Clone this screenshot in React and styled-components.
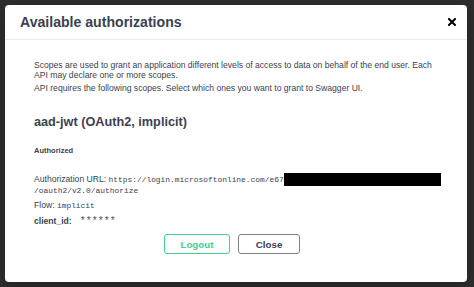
import React from 'react';
import styled, { createGlobalStyle } from 'styled-components';

const GlobalStyle = createGlobalStyle`
  html, body {
    margin: 0;
    padding: 0;
    background: #2e2e2e;
  }
  body {
    font-family: "Liberation Sans", Arial, sans-serif;
    color: #3b4151;
  }
`;

const Backdrop = styled.div`
  width: 474px;
  height: 287px;
  box-sizing: border-box;
  padding: 5px 7px 5px 5px;
  background: #2e2e2e;
`;

const Modal = styled.div`
  width: 462px;
  height: 277px;
  background: #fff;
  border-radius: 4px;
  box-shadow: 0 4px 18px rgba(0, 0, 0, 0.25);
  display: flex;
  flex-direction: column;
  overflow: hidden;
`;

const Header = styled.div`
  height: 34px;
  display: flex;
  align-items: center;
  justify-content: space-between;
  padding: 0 11px 0 15px;
  border-bottom: 1px solid #ebebeb;
`;

const Title = styled.h3`
  margin: 0;
  font-size: 14.1px;
  font-weight: 700;
  color: #3b4151;
`;

const CloseX = styled.button`
  border: none;
  background: none;
  padding: 0;
  width: 8px;
  height: 8px;
  display: flex;
  cursor: pointer;
`;

const Content = styled.div`
  padding: 21px 25px 0 29px;
`;

const Text = styled.p`
  margin: ${p => p.$mt || 0}px 0 0;
  font-size: 8.6px;
  line-height: ${p => p.$lh || 9.6}px;
`;

const AuthName = styled.h4`
  margin: 21.4px 0 0;
  font-size: 12.7px;
  line-height: 14.5px;
  font-weight: 700;
`;

const Status = styled.h6`
  margin: 18.4px 0 0;
  font-size: 7.5px;
  line-height: 8.6px;
  font-weight: 700;
`;

const Code = styled.code`
  font-family: "Liberation Mono", "DejaVu Sans Mono", monospace;
  font-size: 7.9px;
  color: #3b4151;
`;

const Secret = styled.code`
  font-family: "Liberation Mono", "DejaVu Sans Mono", monospace;
  font-size: 10px;
  line-height: 10px;
  letter-spacing: 0;
  color: #555;
`;

const Redacted = styled.span`
  display: inline-block;
  width: 157px;
  height: 13px;
  margin: -2px -8px -1px 0;
  background: #000;
  vertical-align: middle;
`;

const Label = styled.b`
  font-weight: 700;
  margin-right: 8px;
`;

const Buttons = styled.div`
  display: flex;
  justify-content: center;
  margin-top: 7px;
  padding-right: 4px;
`;

const Btn = styled.button`
  box-sizing: border-box;
  height: 20px;
  width: ${p => p.$w}px;
  margin-right: 8px;
  border: 1.5px solid ${p => p.$color};
  border-radius: 3px;
  background: #fff;
  color: ${p => p.$text};
  font-family: "Liberation Sans", Arial, sans-serif;
  font-size: 9.8px;
  font-weight: 700;
  padding: 0;
  cursor: pointer;
`;

export default function App() {
  return (
    <>
      <GlobalStyle />
      <Backdrop>
        <Modal>
          <Header>
            <Title>Available authorizations</Title>
            <CloseX aria-label="Close">
              <svg width="8" height="8" viewBox="0 0 8 8">
                <path d="M1 1 L7 7 M7 1 L1 7" stroke="#000" strokeWidth="2" strokeLinecap="square" />
              </svg>
            </CloseX>
          </Header>
          <Content>
            <Text>
              Scopes are used to grant an application different levels of access to data on behalf of the end user. Each API may declare one or more scopes.
            </Text>
            <Text $mt={3.4}>API requires the following scopes. Select which ones you want to grant to Swagger UI.</Text>
            <AuthName>aad-jwt (OAuth2, implicit)</AuthName>
            <Status>Authorized</Status>
            <Text $mt={18.3} $lh={10}>
              Authorization URL: <Code>https://login.microsoftonline.com/e67</Code><Redacted />
              <br />
              <Code>/oauth2/v2.0/authorize</Code>
            </Text>
            <Text $mt={3.4} $lh={10}>
              Flow: <Code>implicit</Code>
            </Text>
            <Text $mt={5.6} $lh={10}>
              <Label>client_id:</Label><Secret>******</Secret>
            </Text>
            <Buttons>
              <Btn $w={66} $color="#49cc90" $text="#49cc90">Logout</Btn>
              <Btn $w={62} $color="#808080" $text="#3b4151">Close</Btn>
            </Buttons>
          </Content>
        </Modal>
      </Backdrop>
    </>
  );
}
